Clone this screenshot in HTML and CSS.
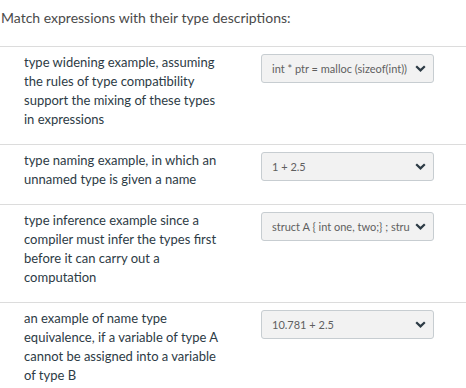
FILE: index.html
```html
<!DOCTYPE html>
<html lang="en">
<head>
    <meta charset="UTF-8">
    <meta name="viewport" content="width=device-width, initial-scale=1.0">
    <title>Matching question</title>
    <link rel="stylesheet" href="styles.css">
</head>
<body>
    <p class="title">Match expressions with their type descriptions:</p>

    <div class="row">
        <div class="desc">type widening example, assuming the rules of type compatibility support the mixing of these types in expressions</div>
        <div class="pick">
            <span class="val">int * ptr = malloc (sizeof(int))</span>
            <svg class="chev" width="11" height="7" viewBox="0 0 11 7"><path d="M1.2 1.2 L5.5 5.4 L9.8 1.2" fill="none" stroke="#2d3b45" stroke-width="2.2"/></svg>
        </div>
    </div>

    <div class="row">
        <div class="desc">type naming example, in which an unnamed type is given a name</div>
        <div class="pick">
            <span class="val">1 + 2.5</span>
            <svg class="chev" width="11" height="7" viewBox="0 0 11 7"><path d="M1.2 1.2 L5.5 5.4 L9.8 1.2" fill="none" stroke="#2d3b45" stroke-width="2.2"/></svg>
        </div>
    </div>

    <div class="row">
        <div class="desc">type inference example since a compiler must infer the types first before it can carry out a computation</div>
        <div class="pick">
            <span class="val">struct A { int one, two;} ; struct B { int one, two;} ;</span>
            <svg class="chev" width="11" height="7" viewBox="0 0 11 7"><path d="M1.2 1.2 L5.5 5.4 L9.8 1.2" fill="none" stroke="#2d3b45" stroke-width="2.2"/></svg>
        </div>
    </div>

    <div class="row">
        <div class="desc">an example of name type equivalence, if a variable of type A cannot be assigned into a variable of type B</div>
        <div class="pick">
            <span class="val">10.781 + 2.5</span>
            <svg class="chev" width="11" height="7" viewBox="0 0 11 7"><path d="M1.2 1.2 L5.5 5.4 L9.8 1.2" fill="none" stroke="#2d3b45" stroke-width="2.2"/></svg>
        </div>
    </div>
</body>
</html>
```

FILE: styles.css
```css
body {
    font-family: Lato, "Liberation Sans", sans-serif;
    margin: 0;
    background: #fff;
    color: #2d3b45;
}
.title {
    margin: 0;
    height: 46px;
    padding: 8px 0 0 1px;
    box-sizing: border-box;
    font-size: 14px;
    line-height: 19px;
    color: #4a4a4a;
}
.row {
    display: flex;
    align-items: flex-start;
    border-top: 1px solid #dcdcdc;
    padding: 6px 0 15px 24px;
}
.desc {
    width: 198px;
    font-size: 13px;
    line-height: 19px;
    color: #2d3b45;
}
.pick {
    display: flex;
    align-items: center;
    margin-left: 39px;
    margin-top: 1px;
    width: 173px;
    height: 29px;
    box-sizing: border-box;
    padding: 0 7px 0 10px;
    background: #f2f2f2;
    border: 1px solid #c7cdd1;
    border-radius: 3px;
}
.val {
    flex: 1;
    overflow: hidden;
    white-space: nowrap;
    font-size: 11px;
    color: #5f5f5f;
}
.chev {
    margin-left: 5px;
    flex: none;
}
```
